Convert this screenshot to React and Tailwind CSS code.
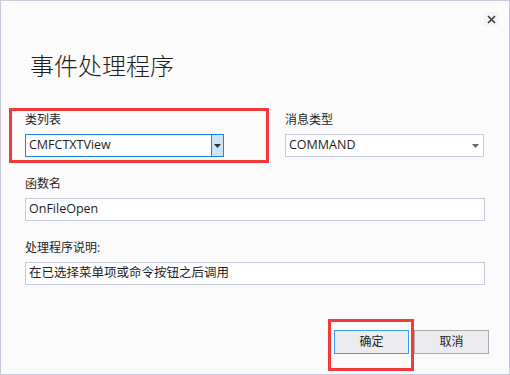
const font = { fontFamily: '"Open Sans", "Noto Sans CJK SC", sans-serif' }

function Caret({ className }) {
  return (
    <svg width="7" height="4" viewBox="0 0 7 4" className={className}>
      <path d="M0 0h7L3.5 4z" fill="currentColor" />
    </svg>
  )
}

function Label({ children }) {
  return <div className="text-[12px] leading-[16px] text-[#1e1e1e]">{children}</div>
}

function TextBox({ value }) {
  return (
    <div className="mt-[6px] h-[23px] border border-[#c9c9dc] bg-white flex items-center px-[3px] text-[12.5px] text-[#1e1e1e]">
      {value}
    </div>
  )
}

export default function App() {
  return (
    <div
      className="relative w-[510px] h-[375px] bg-[#fbfbfb] border border-[#c9c9dc] overflow-hidden flex flex-col px-[24px]"
      style={font}
    >
      <div className="flex justify-end -mr-[13px] mt-[11px]">
        <div className="w-[14px] h-[14px] flex items-center justify-center bg-[#f4f4f4]">
          <svg width="9" height="9" viewBox="0 0 9 9">
            <path d="M1 1l7 7M8 1L1 8" stroke="#3c3c3c" strokeWidth="1.6" />
          </svg>
        </div>
      </div>

      <h1 className="mt-[24px] ml-[5px] text-[24px] leading-[32px] font-light text-[#1e1e1e]">事件处理程序</h1>

      <div className="mt-[30px] flex gap-[61px]">
        <div className="w-[199px]">
          <Label>类列表</Label>
          <div className="mt-[6px] h-[23px] border border-[#1e86d8] bg-white flex">
            <div className="flex-1 flex items-center px-[3px] text-[12.5px] text-[#1e1e1e]">CMFCTXTView</div>
            <div className="w-[12px] border-l border-[#1e86d8] bg-[#cce4f7] flex items-center justify-center text-[#333]">
              <Caret />
            </div>
          </div>
        </div>
        <div className="w-[199px]">
          <Label>消息类型</Label>
          <div className="mt-[6px] h-[23px] border border-[#c9c9dc] bg-white flex items-center">
            <div className="flex-1 px-[3px] text-[12.5px] text-[#1e1e1e]">COMMAND</div>
            <Caret className="mr-[4px] text-[#666]" />
          </div>
        </div>
      </div>

      <div className="mt-[19px]">
        <Label>函数名</Label>
        <TextBox value="OnFileOpen" />
      </div>

      <div className="mt-[19px]">
        <Label>处理程序说明:</Label>
        <TextBox value="在已选择菜单项或命令按钮之后调用" />
      </div>

      <div className="mt-[45px] flex justify-end gap-[5px] -mr-[4px]">
        <button className="w-[75px] h-[24px] border border-[#3c9cf0] bg-[#ececf0] text-[12px] text-[#1e1e1e]">确定</button>
        <button className="w-[75px] h-[24px] border border-[#adadad] bg-[#ececf0] text-[12px] text-[#1e1e1e]">取消</button>
      </div>

      <div className="absolute left-[8px] top-[107px] w-[260px] h-[55px] border-[3px] border-[#f2393c]" />
      <div className="absolute left-[327px] top-[318px] w-[86px] h-[52px] border-[3px] border-[#f2393c]" />
    </div>
  )
}
